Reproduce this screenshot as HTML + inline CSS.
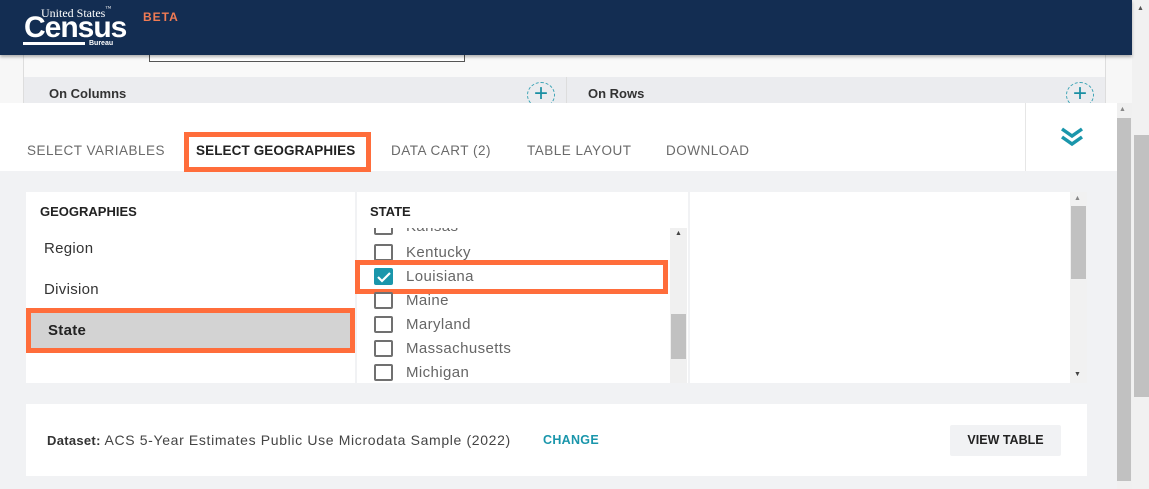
<!DOCTYPE html>
<html><head><meta charset="utf-8"><style>
*{box-sizing:border-box;margin:0;padding:0}
body{width:1149px;height:489px;overflow:hidden;background:#f7f7f7;font-family:"Liberation Sans",Arial,sans-serif;position:relative}
.a{position:absolute}
.t{font-size:13.5px;color:#6a6a6a;top:143px;letter-spacing:.5px}
.cb{position:absolute;left:374px;width:19px;height:17px;border:2px solid #707070;border-radius:2px;background:#fff}
.st{position:absolute;left:406px;font-size:15px;color:#666;letter-spacing:.4px}
</style></head><body>
<!-- header -->
<div class="a" style="left:0;top:0;width:1132px;height:55px;background:#132d52;box-shadow:0 2px 3px rgba(0,0,0,.3);z-index:3"></div>
<div class="a" style="left:41px;top:6px;font-size:12px;color:#fff;font-family:'Liberation Serif',serif;z-index:4">United States<span style="font-size:6px;vertical-align:top">™</span></div>
<div class="a" style="left:24px;top:14px;font-size:30px;font-weight:bold;color:#fff;letter-spacing:-1px;line-height:28px;z-index:4">Census</div>
<div class="a" style="left:23px;top:42px;width:62px;height:3px;background:#fff;z-index:4"></div>
<div class="a" style="left:89px;top:40px;font-size:7px;font-weight:bold;color:#fff;z-index:4">Bureau</div>
<div class="a" style="left:143px;top:10px;font-size:12px;font-weight:bold;color:#f07b54;letter-spacing:1px;z-index:4">BETA</div>
<!-- background page -->
<div class="a" style="left:23px;top:55px;width:1083px;height:48px;background:#f9f9f9;border-left:1px solid #ddd;border-right:1px solid #ddd"></div>
<div class="a" style="left:149px;top:50px;width:316px;height:12px;border:1px solid #555;border-top:none;background:#fff"></div>
<div class="a" style="left:24px;top:77px;width:1081px;height:26px;background:#ebecef"></div>
<div class="a" style="left:566px;top:77px;width:1px;height:26px;background:#ddd"></div>
<div class="a" style="left:49px;top:86px;font-size:13px;font-weight:bold;color:#333">On Columns</div>
<div class="a" style="left:588px;top:86px;font-size:13px;font-weight:bold;color:#333">On Rows</div>
<div class="a" style="left:527px;top:82px;width:28px;height:26px;border:1px dashed #3aa3b5;border-radius:50%;color:#1a8fa3;font-size:24px;line-height:22px;text-align:center">+</div>
<div class="a" style="left:1066px;top:82px;width:28px;height:26px;border:1px dashed #3aa3b5;border-radius:50%;color:#1a8fa3;font-size:24px;line-height:22px;text-align:center">+</div>
<!-- outer scrollbar -->
<div class="a" style="left:1132px;top:0;width:17px;height:489px;background:#f1f1f1"></div>
<div class="a" style="left:1134px;top:135px;width:15px;height:262px;background:#c1c1c1"></div>
<div class="a" style="left:1137px;top:5px;font-size:7px;color:#555">▲</div>
<!-- panel -->
<div class="a" style="left:0;top:103px;width:1117px;height:386px;background:#f1f2f4"></div>
<div class="a" style="left:0;top:103px;width:1117px;height:68px;background:#fff"></div>
<div class="a" style="left:1025px;top:103px;width:1px;height:68px;background:#e6e6e6"></div>
<svg class="a" style="left:1059px;top:126px" width="26" height="22" viewBox="0 0 26 22"><path d="M3 3l10 7 10-7M3 11l10 7 10-7" fill="none" stroke="#1a96ab" stroke-width="3.5"/></svg>
<div class="a" style="left:1117px;top:103px;width:15px;height:386px;background:#f0f0f0"></div>
<div class="a" style="left:1117px;top:118px;width:14px;height:363px;background:#c1c1c1"></div>
<div class="a" style="left:1119px;top:106px;font-size:7px;color:#888">▲</div>
<div class="a t" style="left:27px">SELECT VARIABLES</div>
<div class="a t" style="left:196px;color:#222;font-weight:bold;letter-spacing:.1px">SELECT GEOGRAPHIES</div>
<div class="a" style="left:184px;top:132px;width:187px;height:40px;border:5px solid #ff6d3b"></div>
<div class="a t" style="left:391px">DATA CART (2)</div>
<div class="a t" style="left:527px">TABLE LAYOUT</div>
<div class="a t" style="left:666px">DOWNLOAD</div>
<!-- geographies card -->
<div class="a" style="left:26px;top:192px;width:329px;height:191px;background:#fff"></div>
<div class="a" style="left:40px;top:204px;font-size:13px;font-weight:bold;color:#222">GEOGRAPHIES</div>
<div class="a" style="left:44px;top:240px;font-size:15px;color:#333;letter-spacing:.3px">Region</div>
<div class="a" style="left:44px;top:281px;font-size:15px;color:#333;letter-spacing:.3px">Division</div>
<div class="a" style="left:26px;top:308px;width:329px;height:45px;background:#d3d3d3;border:5px solid #ff6d3b"></div>
<div class="a" style="left:48px;top:322px;font-size:15px;font-weight:bold;color:#222;letter-spacing:.3px">State</div>
<!-- state card -->
<div class="a" style="left:357px;top:192px;width:331px;height:191px;background:#fff"></div>
<div class="a" style="left:370px;top:204px;font-size:13px;font-weight:bold;color:#222">STATE</div>
<div class="a" style="left:358px;top:228px;width:310px;height:155px;overflow:hidden">
 <div class="cb" style="left:16px;top:-10px"></div><div class="st" style="left:48px;top:-10px">Kansas</div>
</div>
<div class="cb" style="top:244px"></div><div class="st" style="top:244px">Kentucky</div>
<div class="cb" style="top:268px;background:#1a96ab;border-color:#1a96ab"></div>
<svg class="a" style="left:376px;top:270px" width="15" height="13"><path d="M2 7l4 4 8-8" fill="none" stroke="#fff" stroke-width="2.2"/></svg>
<div class="st" style="top:268px">Louisiana</div>
<div class="a" style="left:355px;top:260px;width:313px;height:34px;border:5px solid #ff6d3b"></div>
<div class="cb" style="top:292px"></div><div class="st" style="top:292px">Maine</div>
<div class="cb" style="top:316px"></div><div class="st" style="top:316px">Maryland</div>
<div class="cb" style="top:340px"></div><div class="st" style="top:340px">Massachusetts</div>
<div class="cb" style="top:364px"></div><div class="st" style="top:364px">Michigan</div>
<div class="a" style="left:670px;top:228px;width:17px;height:155px;background:#f0f0f0"></div>
<div class="a" style="left:671px;top:314px;width:15px;height:45px;background:#c1c1c1"></div>
<div class="a" style="left:675px;top:230px;font-size:7px;color:#444">▲</div>
<!-- third card -->
<div class="a" style="left:690px;top:192px;width:380px;height:191px;background:#fff"></div>
<div class="a" style="left:1070px;top:192px;width:17px;height:191px;background:#f1f1f1"></div>
<div class="a" style="left:1071px;top:206px;width:15px;height:73px;background:#c1c1c1"></div>
<div class="a" style="left:1074px;top:195px;font-size:7px;color:#888">▲</div>
<div class="a" style="left:1074px;top:371px;font-size:7px;color:#444">▼</div>
<!-- bottom card -->
<div class="a" style="left:26px;top:404px;width:1061px;height:72px;background:#fff"></div>
<div class="a" style="left:47px;top:432px;font-size:14px;color:#444;letter-spacing:.65px"><b style="color:#333;font-size:13px;letter-spacing:.3px">Dataset:</b> ACS 5-Year Estimates Public Use Microdata Sample (2022)</div>
<div class="a" style="left:543px;top:433px;font-size:12.5px;font-weight:bold;color:#1a96ab;letter-spacing:.3px">CHANGE</div>
<div class="a" style="left:950px;top:425px;width:111px;height:31px;background:#f1f2f4;border-radius:2px;font-size:12.5px;font-weight:bold;color:#222;text-align:center;line-height:31px">VIEW TABLE</div>
</body></html>
